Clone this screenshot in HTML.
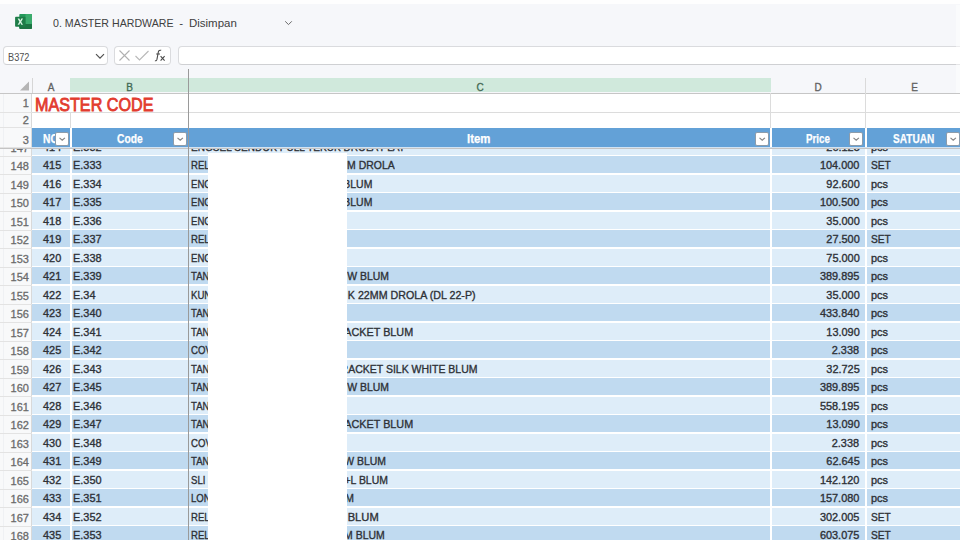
<!DOCTYPE html>
<html><head><meta charset="utf-8">
<style>
*{margin:0;padding:0;box-sizing:border-box}
html,body{width:960px;height:540px;overflow:hidden}
body{position:relative;background:#f6f7fa;font-family:"Liberation Sans",sans-serif;color:#262626}
div{position:absolute}
.topstrip{left:0;top:0;width:960px;height:4.4px;background:#fefefe}
.rstrip{left:956px;top:5px;width:4px;height:87.5px;background:rgba(255,255,255,0.45)}
.title{top:14.5px;font-size:11.5px;color:#404040;white-space:pre;line-height:16px}
.title span{display:inline-block;transform-origin:0 50%}
.box{background:#fff;border:1px solid #dadbde;border-bottom-color:#cfd0d3;border-radius:4px}
.namebox{left:3px;top:46px;width:105px;height:19px}
.nbtext{left:7.8px;top:49.7px;font-size:11.5px;color:#4f4f4f;line-height:14px}
.nbtext span{display:inline-block;transform-origin:0 50%;transform:scaleX(0.8)}
.fbox{left:114px;top:46px;width:57px;height:19px}
.finput{left:178px;top:46px;width:800px;height:19px}
/* grid */
.colhdr{left:0;top:78px;width:960px;height:15.5px;background:#f6f7fa;border-bottom:1.3px solid #c4c4c4}
.green{background:#d0e9dc}
.chl{font-size:10px;color:#616161;line-height:12px;text-align:center;top:81.5px;-webkit-text-stroke:0.3px #616161}
.cells{left:32px;top:93px;width:928px;height:447px;background:#fff}
.rowhdr{left:0;top:93.5px;width:32px;height:447px;background:#f8f9fa;border-right:1px solid #d9d9d9}
.hl{height:1px;background:#dcdcdc}
.vl{width:1px;background:#dcdcdc}
.rh{left:0;width:28.9px;text-align:right;font-size:11px;color:#6b6b6b;line-height:21px;height:18.5px;-webkit-text-stroke:0.3px #6b6b6b}
.rh::after{content:"";position:absolute;left:0;right:-3.5px;bottom:-0.5px;height:1px;background:#e3e3e3}
.rw{left:32px;width:928px}
.dk{background:#c0daf0}
.lt{background:#deedf9}
.t{font-size:12px;line-height:18px;height:18.5px;white-space:nowrap;transform:scaleY(0.955);transform-origin:0 13px;color:#2e3137;-webkit-text-stroke:0.38px #2e3137}
.t span{display:inline-block;transform-origin:0 50%;transform:scaleX(0.91)}
.ca{left:42.5px;width:20px}
.cb{left:72.6px}
.cc{left:190.5px}
.cc span{transform:scaleX(0.8)}
.cc2{text-align:right}
.cc2 span{transform-origin:100% 50%;transform:scaleX(0.87)}
.cd{left:771px;width:88.3px;text-align:right}
.cd span{transform-origin:100% 50%}
.ce{left:871px}
.vsep{width:1.5px;background:#fff}
.hdr{left:32px;top:128px;width:928px;height:18.5px;background:#63a1d7}
.ht{top:130px;height:19px;line-height:19px;font-size:12.5px;font-weight:bold;color:#fff;white-space:nowrap;-webkit-text-stroke:0.25px #fff}
.ht span{display:inline-block;transform-origin:0 50%;transform:scaleX(0.85)}
.fb{width:14px;height:14px;top:132px;background:#fff;border:1px solid #8c9cab;border-radius:2px}
.fb svg{position:absolute;left:0;top:0}
.cover{left:208px;top:152.5px;width:139px;height:400px;background:#fff}
.frz{background:#9a9a9a}
</style></head><body>
<div class="topstrip"></div>
<!-- excel icon -->
<svg style="position:absolute;left:14px;top:13px" width="19" height="17" viewBox="0 0 19 17">
  <rect x="5.3" y="0.9" width="12.7" height="15" rx="0.8" fill="#23985a"/>
  <rect x="11.5" y="0.9" width="6.5" height="10" rx="0.6" fill="#3aab6c"/>
  <rect x="5.3" y="11" width="12.7" height="4.9" rx="0.8" fill="#1b7442"/>
  <rect x="1.1" y="3.7" width="10.4" height="10" rx="0.8" fill="#1d7c47"/>
  <path d="M3.6 5.6 L5.3 5.6 L6.3 7.6 L7.3 5.6 L9 5.6 L7.2 8.7 L9 11.8 L7.3 11.8 L6.3 9.8 L5.3 11.8 L3.6 11.8 L5.4 8.7 Z" fill="#d9f5e3"/>
</svg>
<div class="title" style="left:53px"><span style="transform:scaleX(0.923)">0. MASTER HARDWARE</span></div>
<div class="title" style="left:179.3px">-</div>
<div class="title" style="left:188.8px"><span style="transform:scaleX(0.997)">Disimpan</span></div>
<svg style="position:absolute;left:283px;top:19px" width="11" height="8" viewBox="0 0 11 8"><path d="M2.2 2.3 L5.5 5.6 L8.8 2.3" fill="none" stroke="#6a6a6a" stroke-width="1"/></svg>

<div class="box namebox"></div>
<div class="nbtext"><span>B372</span></div>
<svg style="position:absolute;left:95px;top:53px" width="10" height="7" viewBox="0 0 10 7"><path d="M1 1.2 L5 5.2 L9 1.2" fill="none" stroke="#505050" stroke-width="1.15"/></svg>
<div class="box fbox"></div>
<svg style="position:absolute;left:118px;top:49px" width="50" height="13" viewBox="0 0 50 13">
 <path d="M1.5 1.5 L11.5 11.5 M11.5 1.5 L1.5 11.5" stroke="#b0b0b0" stroke-width="1.1" fill="none"/>
 <path d="M17.5 7 L21.5 11 L30.5 2" stroke="#b8b8b8" stroke-width="1.1" fill="none"/>
 <path d="M43.2 1.3 C41.6 0.9 40.6 1.6 40.3 3.2 L39 10.2 C38.7 11.6 38 12 36.9 11.7 M38.2 5 L42 5" stroke="#4a4a4a" stroke-width="1.1" fill="none"/>
 <path d="M42.6 7.2 L46.6 11.6 M46.6 7.2 L42.6 11.6" stroke="#4a4a4a" stroke-width="1.1" fill="none"/>
</svg>
<div class="box finput"></div>

<!-- grid -->
<div class="colhdr"></div>
<div class="green" style="left:70px;top:78px;width:700.5px;height:14.3px"></div>
<svg style="position:absolute;left:19px;top:81px" width="11" height="10" viewBox="0 0 11 10"><path d="M1 9.5 L10 9.5 L10 0.5 Z" fill="#b5b5b5"/></svg>
<div class="vl" style="left:32px;top:78px;height:15px;background:#d6d6d6"></div>
<div class="vl" style="left:865px;top:78px;height:15px;background:#dadada"></div>
<div class="chl" style="left:32px;width:38px">A</div>
<div class="chl" style="left:70px;width:119px;color:#217346">B</div>
<div class="chl" style="left:189px;width:582px;color:#217346">C</div>
<div class="chl" style="left:771px;width:94px">D</div>
<div class="chl" style="left:867px;width:95px">E</div>

<div class="rstrip"></div>
<div class="cells"></div>
<div class="rowhdr"></div>
<div style="left:2.5px;top:93.5px;width:1px;height:447px;background:#eff1f4"></div>
<div style="left:0;top:92.6px;width:960px;height:1.2px;background:#c6c6c6"></div>
<div class="rh" style="top:93px;height:19.3px;line-height:20px">1</div>
<div class="rh" style="top:112.3px;height:15.7px;line-height:17.5px">2</div>
<div class="rh" style="top:128px;height:19px;line-height:24px">3</div>
<!-- rows 1-2 gridlines -->
<div class="hl" style="left:32px;top:112px;width:928px"></div>
<div class="vl" style="left:70px;top:112px;height:16px"></div>
<div class="vl" style="left:770px;top:93px;height:35px"></div>
<div class="vl" style="left:865px;top:93px;height:35px"></div>
<div style="left:34.9px;top:92.5px;font-size:19px;color:#e23b2e;-webkit-text-stroke:0.85px #e23b2e;line-height:24px;white-space:nowrap"><span style="display:inline-block;transform-origin:0 50%;transform:scaleX(0.85)">MASTER CODE</span></div>

<!-- scrolled data -->
<div style="left:0;top:148px;width:960px;height:392px;overflow:hidden">
<div style="left:0;top:-148px;width:960px;height:540px">
<div class="rh" style="top:137.50px">147</div>
<div class="rw lt" style="top:137.50px;height:17.00px"></div>
<div class="t ca" style="top:137.50px"><span>414</span></div>
<div class="t cb" style="top:137.50px"><span>E.332</span></div>
<div class="t cc" style="top:137.50px"><span style="transform:scaleX(0.84)">ENGSEL SENDOK PULL TEKUK DROLA PLAT</span></div>
<div class="t cd" style="top:137.50px"><span>26.125</span></div>
<div class="t ce" style="top:137.50px"><span>pcs</span></div>
<div class="rh" style="top:156.00px">148</div>
<div class="rw dk" style="top:156.00px;height:17.00px"></div>
<div class="t ca" style="top:156.00px"><span>415</span></div>
<div class="t cb" style="top:156.00px"><span>E.333</span></div>
<div class="t cc" style="top:156.00px"><span>REL</span></div>
<div class="t cc2" style="top:156.00px;right:565.30px"><span>M DROLA</span></div>
<div class="t cd" style="top:156.00px"><span>104.000</span></div>
<div class="t ce" style="top:156.00px"><span style="transform:scaleX(0.85)">SET</span></div>
<div class="rh" style="top:174.50px">149</div>
<div class="rw lt" style="top:174.50px;height:17.00px"></div>
<div class="t ca" style="top:174.50px"><span>416</span></div>
<div class="t cb" style="top:174.50px"><span>E.334</span></div>
<div class="t cc" style="top:174.50px"><span>ENG</span></div>
<div class="t cc2" style="top:174.50px;right:587.50px"><span>BLUM</span></div>
<div class="t cd" style="top:174.50px"><span>92.600</span></div>
<div class="t ce" style="top:174.50px"><span>pcs</span></div>
<div class="rh" style="top:193.00px">150</div>
<div class="rw dk" style="top:193.00px;height:17.00px"></div>
<div class="t ca" style="top:193.00px"><span>417</span></div>
<div class="t cb" style="top:193.00px"><span>E.335</span></div>
<div class="t cc" style="top:193.00px"><span>ENG</span></div>
<div class="t cc2" style="top:193.00px;right:587.50px"><span>BLUM</span></div>
<div class="t cd" style="top:193.00px"><span>100.500</span></div>
<div class="t ce" style="top:193.00px"><span>pcs</span></div>
<div class="rh" style="top:211.50px">151</div>
<div class="rw lt" style="top:211.50px;height:17.00px"></div>
<div class="t ca" style="top:211.50px"><span>418</span></div>
<div class="t cb" style="top:211.50px"><span>E.336</span></div>
<div class="t cc" style="top:211.50px"><span>ENG</span></div>
<div class="t cd" style="top:211.50px"><span>35.000</span></div>
<div class="t ce" style="top:211.50px"><span>pcs</span></div>
<div class="rh" style="top:230.00px">152</div>
<div class="rw dk" style="top:230.00px;height:17.00px"></div>
<div class="t ca" style="top:230.00px"><span>419</span></div>
<div class="t cb" style="top:230.00px"><span>E.337</span></div>
<div class="t cc" style="top:230.00px"><span>REL</span></div>
<div class="t cd" style="top:230.00px"><span>27.500</span></div>
<div class="t ce" style="top:230.00px"><span style="transform:scaleX(0.85)">SET</span></div>
<div class="rh" style="top:248.50px">153</div>
<div class="rw lt" style="top:248.50px;height:17.00px"></div>
<div class="t ca" style="top:248.50px"><span>420</span></div>
<div class="t cb" style="top:248.50px"><span>E.338</span></div>
<div class="t cc" style="top:248.50px"><span>ENG</span></div>
<div class="t cd" style="top:248.50px"><span>75.000</span></div>
<div class="t ce" style="top:248.50px"><span>pcs</span></div>
<div class="rh" style="top:267.00px">154</div>
<div class="rw dk" style="top:267.00px;height:17.00px"></div>
<div class="t ca" style="top:267.00px"><span>421</span></div>
<div class="t cb" style="top:267.00px"><span>E.339</span></div>
<div class="t cc" style="top:267.00px"><span>TAN</span></div>
<div class="t cc2" style="top:267.00px;right:571.20px"><span>W BLUM</span></div>
<div class="t cd" style="top:267.00px"><span>389.895</span></div>
<div class="t ce" style="top:267.00px"><span>pcs</span></div>
<div class="rh" style="top:285.50px">155</div>
<div class="rw lt" style="top:285.50px;height:17.00px"></div>
<div class="t ca" style="top:285.50px"><span>422</span></div>
<div class="t cb" style="top:285.50px"><span>E.34</span></div>
<div class="t cc" style="top:285.50px"><span>KUN</span></div>
<div class="t cc2" style="top:285.50px;right:484.40px"><span style="transform:scaleX(0.89)">K 22MM DROLA (DL 22-P)</span></div>
<div class="t cd" style="top:285.50px"><span>35.000</span></div>
<div class="t ce" style="top:285.50px"><span>pcs</span></div>
<div class="rh" style="top:304.00px">156</div>
<div class="rw dk" style="top:304.00px;height:17.00px"></div>
<div class="t ca" style="top:304.00px"><span>423</span></div>
<div class="t cb" style="top:304.00px"><span>E.340</span></div>
<div class="t cc" style="top:304.00px"><span>TAN</span></div>
<div class="t cd" style="top:304.00px"><span>433.840</span></div>
<div class="t ce" style="top:304.00px"><span>pcs</span></div>
<div class="rh" style="top:322.50px">157</div>
<div class="rw lt" style="top:322.50px;height:17.00px"></div>
<div class="t ca" style="top:322.50px"><span>424</span></div>
<div class="t cb" style="top:322.50px"><span>E.341</span></div>
<div class="t cc" style="top:322.50px"><span>TAN</span></div>
<div class="t cc2" style="top:322.50px;right:546.40px"><span style="transform:scaleX(0.9)">RACKET BLUM</span></div>
<div class="t cd" style="top:322.50px"><span>13.090</span></div>
<div class="t ce" style="top:322.50px"><span>pcs</span></div>
<div class="rh" style="top:341.00px">158</div>
<div class="rw dk" style="top:341.00px;height:17.00px"></div>
<div class="t ca" style="top:341.00px"><span>425</span></div>
<div class="t cb" style="top:341.00px"><span>E.342</span></div>
<div class="t cc" style="top:341.00px"><span>COV</span></div>
<div class="t cd" style="top:341.00px"><span>2.338</span></div>
<div class="t ce" style="top:341.00px"><span>pcs</span></div>
<div class="rh" style="top:359.50px">159</div>
<div class="rw lt" style="top:359.50px;height:17.00px"></div>
<div class="t ca" style="top:359.50px"><span>426</span></div>
<div class="t cb" style="top:359.50px"><span>E.343</span></div>
<div class="t cc" style="top:359.50px"><span>TAN</span></div>
<div class="t cc2" style="top:359.50px;right:482.20px"><span style="transform:scaleX(0.875)">RACKET SILK WHITE BLUM</span></div>
<div class="t cd" style="top:359.50px"><span>32.725</span></div>
<div class="t ce" style="top:359.50px"><span>pcs</span></div>
<div class="rh" style="top:378.00px">160</div>
<div class="rw dk" style="top:378.00px;height:17.00px"></div>
<div class="t ca" style="top:378.00px"><span>427</span></div>
<div class="t cb" style="top:378.00px"><span>E.345</span></div>
<div class="t cc" style="top:378.00px"><span>TAN</span></div>
<div class="t cc2" style="top:378.00px;right:571.20px"><span>W BLUM</span></div>
<div class="t cd" style="top:378.00px"><span>389.895</span></div>
<div class="t ce" style="top:378.00px"><span>pcs</span></div>
<div class="rh" style="top:396.50px">161</div>
<div class="rw lt" style="top:396.50px;height:17.00px"></div>
<div class="t ca" style="top:396.50px"><span>428</span></div>
<div class="t cb" style="top:396.50px"><span>E.346</span></div>
<div class="t cc" style="top:396.50px"><span>TAN</span></div>
<div class="t cd" style="top:396.50px"><span>558.195</span></div>
<div class="t ce" style="top:396.50px"><span>pcs</span></div>
<div class="rh" style="top:415.00px">162</div>
<div class="rw dk" style="top:415.00px;height:17.00px"></div>
<div class="t ca" style="top:415.00px"><span>429</span></div>
<div class="t cb" style="top:415.00px"><span>E.347</span></div>
<div class="t cc" style="top:415.00px"><span>TAN</span></div>
<div class="t cc2" style="top:415.00px;right:546.40px"><span style="transform:scaleX(0.9)">RACKET BLUM</span></div>
<div class="t cd" style="top:415.00px"><span>13.090</span></div>
<div class="t ce" style="top:415.00px"><span>pcs</span></div>
<div class="rh" style="top:433.50px">163</div>
<div class="rw lt" style="top:433.50px;height:17.00px"></div>
<div class="t ca" style="top:433.50px"><span>430</span></div>
<div class="t cb" style="top:433.50px"><span>E.348</span></div>
<div class="t cc" style="top:433.50px"><span>COV</span></div>
<div class="t cd" style="top:433.50px"><span>2.338</span></div>
<div class="t ce" style="top:433.50px"><span>pcs</span></div>
<div class="rh" style="top:452.00px">164</div>
<div class="rw dk" style="top:452.00px;height:17.00px"></div>
<div class="t ca" style="top:452.00px"><span>431</span></div>
<div class="t cb" style="top:452.00px"><span>E.349</span></div>
<div class="t cc" style="top:452.00px"><span>TAN</span></div>
<div class="t cc2" style="top:452.00px;right:574.20px"><span>W BLUM</span></div>
<div class="t cd" style="top:452.00px"><span>62.645</span></div>
<div class="t ce" style="top:452.00px"><span>pcs</span></div>
<div class="rh" style="top:470.50px">165</div>
<div class="rw lt" style="top:470.50px;height:17.00px"></div>
<div class="t ca" style="top:470.50px"><span>432</span></div>
<div class="t cb" style="top:470.50px"><span>E.350</span></div>
<div class="t cc" style="top:470.50px"><span>SLI</span></div>
<div class="t cc2" style="top:470.50px;right:571.70px"><span>+L BLUM</span></div>
<div class="t cd" style="top:470.50px"><span>142.120</span></div>
<div class="t ce" style="top:470.50px"><span>pcs</span></div>
<div class="rh" style="top:489.00px">166</div>
<div class="rw dk" style="top:489.00px;height:17.00px"></div>
<div class="t ca" style="top:489.00px"><span>433</span></div>
<div class="t cb" style="top:489.00px"><span>E.351</span></div>
<div class="t cc" style="top:489.00px"><span>LON</span></div>
<div class="t cc2" style="top:489.00px;right:605.90px"><span>M</span></div>
<div class="t cd" style="top:489.00px"><span>157.080</span></div>
<div class="t ce" style="top:489.00px"><span>pcs</span></div>
<div class="rh" style="top:507.50px">167</div>
<div class="rw lt" style="top:507.50px;height:17.00px"></div>
<div class="t ca" style="top:507.50px"><span>434</span></div>
<div class="t cb" style="top:507.50px"><span>E.352</span></div>
<div class="t cc" style="top:507.50px"><span>REL</span></div>
<div class="t cc2" style="top:507.50px;right:580.90px"><span style="transform:scaleX(0.93)">S BLUM</span></div>
<div class="t cd" style="top:507.50px"><span>302.005</span></div>
<div class="t ce" style="top:507.50px"><span style="transform:scaleX(0.85)">SET</span></div>
<div class="rh" style="top:526.00px">168</div>
<div class="rw dk" style="top:526.00px;height:17.00px"></div>
<div class="t ca" style="top:526.00px"><span>435</span></div>
<div class="t cb" style="top:526.00px"><span>E.353</span></div>
<div class="t cc" style="top:526.00px"><span>REL</span></div>
<div class="t cc2" style="top:526.00px;right:575.00px"><span>M BLUM</span></div>
<div class="t cd" style="top:526.00px"><span>603.075</span></div>
<div class="t ce" style="top:526.00px"><span style="transform:scaleX(0.85)">SET</span></div>
<div class="vsep" style="left:70px;top:0;height:540px"></div>
<div class="vsep" style="left:770px;top:0;height:540px"></div>
<div class="vsep" style="left:865px;top:0;height:540px"></div>
<div class="cover"></div>
</div>
</div>

<!-- table header row 3 -->
<div class="hdr"></div>
<div class="vsep" style="left:70px;top:128px;height:18.5px"></div>
<div class="vsep" style="left:770px;top:128px;height:18.5px"></div>
<div class="vsep" style="left:865px;top:128px;height:18.5px"></div>
<div style="left:32px;top:146.5px;width:928px;height:2px;background:#d2e3f3"></div>
<div style="left:0;top:148.3px;width:960px;height:1.2px;background:#c4c4c4"></div>
<div class="ht" style="left:43.4px"><span style="transform:scaleX(0.82)">NO</span></div>
<div class="fb" style="left:55px"><svg width="12" height="12"><path d="M3.5 4.9 L6.2 7.2 L8.9 4.9" stroke="#858585" stroke-width="1.2" fill="none"/></svg></div>
<div class="ht" style="left:117px"><span style="transform:scaleX(0.82)">Code</span></div>
<div class="fb" style="left:172.5px"><svg width="12" height="12"><path d="M3.5 4.9 L6.2 7.2 L8.9 4.9" stroke="#858585" stroke-width="1.2" fill="none"/></svg></div>
<div class="ht" style="left:466.8px"><span style="transform:scaleX(0.91)">Item</span></div>
<div class="fb" style="left:755px"><svg width="12" height="12"><path d="M3.5 4.9 L6.2 7.2 L8.9 4.9" stroke="#858585" stroke-width="1.2" fill="none"/></svg></div>
<div class="ht" style="left:806px"><span style="transform:scaleX(0.78)">Price</span></div>
<div class="fb" style="left:849px"><svg width="12" height="12"><path d="M3.5 4.9 L6.2 7.2 L8.9 4.9" stroke="#858585" stroke-width="1.2" fill="none"/></svg></div>
<div class="ht" style="left:893.3px"><span style="transform:scaleX(0.805)">SATUAN</span></div>
<div class="fb" style="left:945.5px"><svg width="12" height="12"><path d="M3.5 4.9 L6.2 7.2 L8.9 4.9" stroke="#858585" stroke-width="1.2" fill="none"/></svg></div>
<div class="frz" style="left:188px;top:69px;width:1px;height:471px"></div>
</body></html>
